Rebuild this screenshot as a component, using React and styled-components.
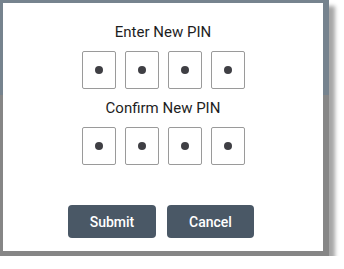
import React from "react";
import styled, { createGlobalStyle } from "styled-components";

const GlobalStyle = createGlobalStyle`
  html, body {
    margin: 0;
    padding: 0;
    background: #ffffff;
  }
  body {
    font-family: Roboto, "Liberation Sans", Arial, sans-serif;
  }
`;

const Frame = styled.div`
  width: 329px;
  height: 256px;
  box-sizing: border-box;
  padding: 3px 6px 5px 3px;
  background: linear-gradient(to bottom, #76838e 0, #76838e 95px, #868686 95px);
  box-shadow: 6px 6px 4px rgba(0, 0, 0, 0.35);
`;

const Dialog = styled.div`
  width: 320px;
  height: 248px;
  box-sizing: border-box;
  background: #ffffff;
  display: flex;
  flex-direction: column;
  align-items: center;
  padding-top: 20px;
`;

const Label = styled.div`
  font-size: 15px;
  line-height: 18px;
  color: #1e1e1e;
  margin-top: ${(p) => p.$top || 0}px;
`;

const PinRow = styled.div`
  display: flex;
  gap: 9px;
  margin-top: 10px;
`;

const PinBox = styled.div`
  width: 34px;
  height: 38px;
  box-sizing: border-box;
  border: 1px solid #9a9a9a;
  border-radius: 2px;
  display: flex;
  align-items: center;
  justify-content: center;
`;

const Dot = styled.span`
  width: 8px;
  height: 8px;
  border-radius: 50%;
  background: #3f3f44;
`;

const Actions = styled.div`
  display: flex;
  gap: 11px;
  margin-top: 40px;
  margin-right: 4px;
`;

const Button = styled.button`
  width: ${(p) => p.$width || 88}px;
  height: 33px;
  border: none;
  border-radius: 4px;
  background: #4a5866;
  color: #ffffff;
  font-family: Roboto, "Liberation Sans", Arial, sans-serif;
  font-size: 14px;
  font-weight: 500;
  cursor: pointer;
`;

const PinInput = () => (
  <PinRow>
    {[0, 1, 2, 3].map((i) => (
      <PinBox key={i}>
        <Dot />
      </PinBox>
    ))}
  </PinRow>
);

export default function App() {
  return (
    <>
      <GlobalStyle />
      <Frame>
        <Dialog>
          <Label>Enter New PIN</Label>
          <PinInput />
          <Label $top={10}>Confirm New PIN</Label>
          <PinInput />
          <Actions>
            <Button>Submit</Button>
            <Button $width={87}>Cancel</Button>
          </Actions>
        </Dialog>
      </Frame>
    </>
  );
}
